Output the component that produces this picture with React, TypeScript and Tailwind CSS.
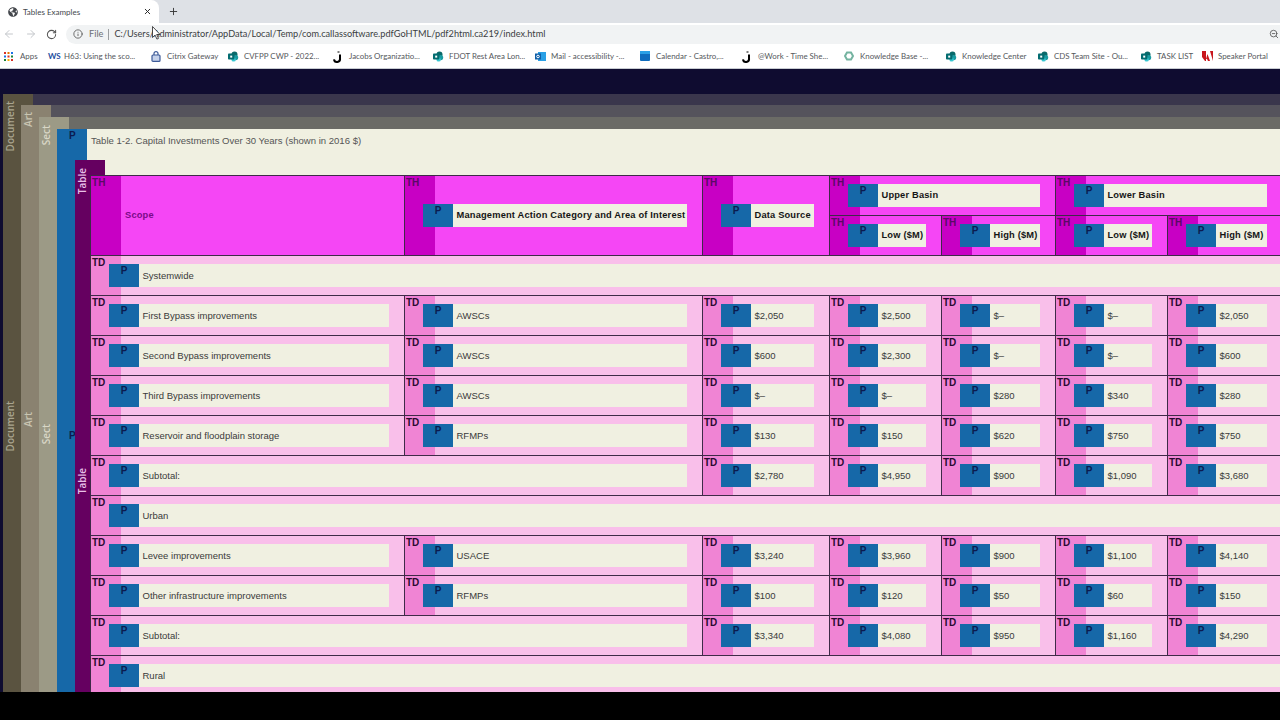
import { ArrowLeft, ArrowRight, Info, Plus, RotateCw, X, ZoomOut } from 'lucide-react';
import { FaGlobeAmericas } from 'react-icons/fa';

type Bookmark = { label: string; icon: string; width: string };

const bookmarks: Bookmark[] = [
    { label: 'Apps', icon: 'apps', width: 'w-[44px]' },
    { label: 'H63: Using the sco...', icon: 'ws', width: 'w-[103px]' },
    { label: 'Citrix Gateway', icon: 'citrix', width: 'w-[77px]' },
    { label: 'CVFPP CWP - 2022...', icon: 'sp', width: 'w-[105px]' },
    { label: 'Jacobs Organizatio...', icon: 'j', width: 'w-[100px]' },
    { label: 'FDOT Rest Area Lon...', icon: 'sp', width: 'w-[102px]' },
    { label: 'Mail - accessibility -...', icon: 'mail', width: 'w-[105px]' },
    { label: 'Calendar - Castro,...', icon: 'cal', width: 'w-[102px]' },
    { label: '@Work - Time She...', icon: 'j', width: 'w-[102px]' },
    { label: 'Knowledge Base -...', icon: 'kb', width: 'w-[102px]' },
    { label: 'Knowledge Center', icon: 'sp', width: 'w-[92px]' },
    { label: 'CDS Team Site - Ou...', icon: 'sp', width: 'w-[103px]' },
    { label: 'TASK LIST', icon: 'sp', width: 'w-[61px]' },
    { label: 'Speaker Portal', icon: 'adobe', width: 'w-[78px]' },
];

function BookmarkIcon({ kind }: { kind: string }) {
    if (kind === 'apps') {
        return (
            <svg width="9" height="9" viewBox="0 0 9 9">
                <rect x="0" y="0" width="2" height="2" fill="#d93025" />
                <rect x="3.5" y="0" width="2" height="2" fill="#e37400" />
                <rect x="7" y="0" width="2" height="2" fill="#1a73e8" />
                <rect x="0" y="3.5" width="2" height="2" fill="#1a73e8" />
                <rect x="3.5" y="3.5" width="2" height="2" fill="#d93025" />
                <rect x="7" y="3.5" width="2" height="2" fill="#188038" />
                <rect x="0" y="7" width="2" height="2" fill="#188038" />
                <rect x="3.5" y="7" width="2" height="2" fill="#f9ab00" />
                <rect x="7" y="7" width="2" height="2" fill="#d93025" />
            </svg>
        );
    }
    if (kind === 'ws') {
        return <span className="text-[8px] leading-none font-bold text-[#1f4fa0]">WS</span>;
    }
    if (kind === 'citrix') {
        return (
            <svg width="10" height="11" viewBox="0 0 10 11" fill="none" stroke="#3d5a98" strokeWidth="1.2">
                <rect x="1" y="4" width="8" height="6.4" rx="1" fill="#c6d2ea" />
                <path d="M3 4V2.6a2 2 0 0 1 4 0V4" />
            </svg>
        );
    }
    if (kind === 'sp') {
        return (
            <svg width="11" height="11" viewBox="0 0 11 11">
                <circle cx="6.5" cy="3.4" r="3" fill="#0b6a6a" />
                <circle cx="7.6" cy="6.6" r="2.6" fill="#1a9ba1" />
                <circle cx="5.6" cy="8.4" r="2.2" fill="#37c6d0" />
                <rect x="0" y="2.6" width="6.4" height="6" rx="0.8" fill="#036c70" />
                <rect x="2.2" y="4.6" width="2" height="2" fill="#ffffff" />
            </svg>
        );
    }
    if (kind === 'j') {
        return (
            <svg width="9" height="12" viewBox="0 0 9 12" fill="none" stroke="#000000" strokeWidth="2">
                <path d="M5.5 0.5v1M7 3.5v4a3 3 0 0 1-6 0.8" />
            </svg>
        );
    }
    if (kind === 'mail') {
        return (
            <svg width="11" height="11" viewBox="0 0 11 11">
                <rect x="3" y="1" width="8" height="9" fill="#2aa0e6" />
                <rect x="0" y="2.5" width="6" height="6" fill="#0f5fa8" />
                <circle cx="3" cy="5.5" r="1.3" fill="none" stroke="#ffffff" />
            </svg>
        );
    }
    if (kind === 'cal') {
        return (
            <svg width="10" height="10" viewBox="0 0 10 10">
                <rect x="0" y="0" width="10" height="10" rx="1" fill="#0f6cbd" />
                <rect x="0" y="0" width="10" height="3" fill="#2aa0e6" />
            </svg>
        );
    }
    if (kind === 'kb') {
        return (
            <svg width="10" height="10" viewBox="0 0 10 10" fill="none" stroke="#74b3a0" strokeWidth="2">
                <path d="M3 1.5h4L9 5 7 8.5H3L1 5z" />
            </svg>
        );
    }
    return (
        <svg width="11" height="10" viewBox="0 0 11 10" fill="#c8161d">
            <path d="M0 0h4v10H3L0 6zM7 0h4v10L8 0zM5.5 3l2.5 7H6L5 8H4z" />
        </svg>
    );
}

function BrowserChrome() {
    return (
        <div className="h-[69px] shrink-0 bg-white font-['Lato',sans-serif] text-[#4a4d52]">
            <div className="flex h-[23px] bg-[#dee1e6]">
                <div className="flex w-[159px] items-center rounded-tr-lg bg-white pl-[8px] pr-[7px] text-[8px] text-[#45484d]">
                    <FaGlobeAmericas size={10} className="text-[#45484d]" />
                    <span className="ml-[5px] flex-1">Tables Examples</span>
                    <X size={9} strokeWidth={2.5} className="text-[#222]" />
                </div>
                <div className="flex items-center pl-[9px]">
                    <Plus size={11} strokeWidth={2} className="text-[#333]" />
                </div>
            </div>
            <div className="flex h-[22px] items-center bg-white pl-[3px]">
                <ArrowLeft size={12} className="text-[#c4c7cb]" />
                <ArrowRight size={12} className="ml-[10px] text-[#c4c7cb]" />
                <RotateCw size={11} strokeWidth={2.2} className="ml-[9px] text-[#555]" />
                <div className="ml-[9px] flex h-[19px] flex-1 items-center rounded-l-full bg-[#f1f3f4] pl-[7px] pr-[1px] text-[9.2px]">
                    <Info size={10} className="text-[#555]" />
                    <span className="ml-[6px] text-[#6c6f73]">File</span>
                    <span className="mx-[5px] h-[11px] w-px bg-[#9a9da0]" />
                    <span className="text-[#3b3e42]">C:/Users/Administrator/AppData/Local/Temp/com.callassoftware.pdfGoHTML/pdf2html.ca219/index.html</span>
                    <ZoomOut size={10} className="ml-auto text-[#555]" />
                </div>
            </div>
            <div className="flex h-[24px] items-center border-b border-[#c8ccd2] pl-[4px] text-[7.9px] text-[#55585c]">
                {bookmarks.map((b) => (
                    <div key={b.label + b.icon} className={`flex shrink-0 items-center ${b.width}`}>
                        <span className="flex w-[16px] shrink-0 items-center">
                            <BookmarkIcon kind={b.icon} />
                        </span>
                        <span className="whitespace-nowrap">{b.label}</span>
                    </div>
                ))}
            </div>
        </div>
    );
}

function Label({ children, className }: { children: string; className: string }) {
    return (
        <span className={`absolute rotate-180 font-['Open_Sans',sans-serif] text-[10px] leading-none font-semibold [writing-mode:vertical-rl] ${className}`}>
            {children}
        </span>
    );
}

function Block({ text, bold }: { text: string; bold?: boolean }) {
    return (
        <div className="flex h-[23px] w-full">
            <div className="flex h-[23px] w-[30px] shrink-0 justify-center bg-[#1668a8] text-[10px] leading-[13px] font-bold text-[#0b1b50]">
                P
            </div>
            <div
                className={`flex flex-1 items-center whitespace-nowrap bg-[#f0f0e1] pt-px pl-[3.5px] ${
                    bold ? 'text-[9.3px] font-bold tracking-[0.18px] text-[#151515]' : 'text-[9.5px] text-[#3a3a3a]'
                }`}
            >
                {text}
            </div>
        </div>
    );
}

function Cell({
    kind,
    text,
    span,
    full,
    className = '',
}: {
    kind: 'TH' | 'TD';
    text?: string;
    span?: string;
    full?: boolean;
    className?: string;
}) {
    const isHead = kind === 'TH';
    return (
        <div
            className={`relative flex min-w-0 items-center border-t border-l border-[#3f2a48] pl-[18px] ${
                full ? 'pr-0' : 'pr-[15px]'
            } ${isHead ? 'bg-[#f546f5]' : 'bg-[#f9bfea]'} ${span ?? ''} ${className}`}
        >
            <div className={`absolute inset-y-0 left-0 w-[29.5px] pl-[1px] text-[10px] leading-[13px] font-bold ${isHead ? 'bg-[#c800c4] text-[#5a0a66]' : 'bg-[#f084d4] text-[#2a0a30]'}`}>
                {kind}
            </div>
            {text !== undefined && (
                <div className="relative w-full">
                    <Block text={text} bold={isHead} />
                </div>
            )}
        </div>
    );
}

type Row = { name: string; cat?: string; vals?: string[] };

const rows: Row[] = [
    { name: 'Systemwide' },
    { name: 'First Bypass improvements', cat: 'AWSCs', vals: ['$2,050', '$2,500', '$–', '$–', '$2,050'] },
    { name: 'Second Bypass improvements', cat: 'AWSCs', vals: ['$600', '$2,300', '$–', '$–', '$600'] },
    { name: 'Third Bypass improvements', cat: 'AWSCs', vals: ['$–', '$–', '$280', '$340', '$280'] },
    { name: 'Reservoir and floodplain storage', cat: 'RFMPs', vals: ['$130', '$150', '$620', '$750', '$750'] },
    { name: 'Subtotal:', vals: ['$2,780', '$4,950', '$900', '$1,090', '$3,680'] },
    { name: 'Urban' },
    { name: 'Levee improvements', cat: 'USACE', vals: ['$3,240', '$3,960', '$900', '$1,100', '$4,140'] },
    { name: 'Other infrastructure improvements', cat: 'RFMPs', vals: ['$100', '$120', '$50', '$60', '$150'] },
    { name: 'Subtotal:', vals: ['$3,340', '$4,080', '$950', '$1,160', '$4,290'] },
    { name: 'Rural' },
];

function DataTable() {
    return (
        <div className="grid w-[1192px] grid-cols-[314px_298px_127px_112px_114px_112px_115px] auto-rows-[40px]">
            {/* header */}
            <div className="relative row-span-2 flex items-center border-t border-l border-[#3f2a48] bg-[#f546f5] pt-px pl-[34px] text-[9.3px] font-bold tracking-[0.18px] text-[#7a0a88]">
                <div className="absolute inset-y-0 left-0 w-[29.5px] pl-[1px] text-[10px] leading-[13px] font-bold bg-[#c800c4] text-[#5a0a66]">TH</div>
                <span className="relative">Scope</span>
            </div>
            <Cell kind="TH" text="Management Action Category and Area of Interest" span="row-span-2" />
            <Cell kind="TH" text="Data Source" span="row-span-2" />
            <Cell kind="TH" text="Upper Basin" span="col-span-2" />
            <Cell kind="TH" text="Lower Basin" span="col-span-2" />
            <Cell kind="TH" text="Low ($M)" className="col-start-4" />
            <Cell kind="TH" text="High ($M)" />
            <Cell kind="TH" text="Low ($M)" />
            <Cell kind="TH" text="High ($M)" />

            {rows.map((r, i) => {
                if (!r.vals) {
                    return <Cell key={i} kind="TD" text={r.name} span="col-span-7" full />;
                }
                return [
                    r.cat ? (
                        <Cell key={`${i}-n`} kind="TD" text={r.name} />
                    ) : (
                        <Cell key={`${i}-n`} kind="TD" text={r.name} span="col-span-2" />
                    ),
                    r.cat ? <Cell key={`${i}-c`} kind="TD" text={r.cat} /> : null,
                    ...r.vals.map((v, j) => <Cell key={`${i}-${j}`} kind="TD" text={v} />),
                ];
            })}
        </div>
    );
}

export default function App() {
    return (
        <div className="relative flex h-[720px] w-[1280px] flex-col overflow-hidden bg-black font-['Liberation_Sans',sans-serif]">
            <BrowserChrome />
            <div className="h-[623px] shrink-0 overflow-hidden bg-[#0f0c30] pt-[25px] pl-[3px]">
                {/* Document */}
                <div className="relative h-[700px] bg-[#3a364c] pt-[11px] pl-[18px]">
                    <div className="absolute top-0 left-0 h-[30px] w-[30px] bg-[#5a5340]" />
                    <div className="absolute top-0 left-0 h-full w-[18px] bg-[#5a5340]" />
                    <Label className="top-[7px] left-[2px] text-[#a9a48f]">Document</Label>
                    <Label className="top-[307px] left-[2px] text-[#a9a48f]">Document</Label>
                    {/* Art */}
                    <div className="relative h-full bg-[#55535c] pt-[12px] pl-[18px]">
                        <div className="absolute top-0 left-0 h-[30px] w-[30px] bg-[#8a8270]" />
                        <div className="absolute top-0 left-0 h-full w-[18px] bg-[#8a8270]" />
                        <Label className="top-[7px] left-[2px] text-[#c9c5b2]">Art</Label>
                        <Label className="top-[307px] left-[2px] text-[#c9c5b2]">Art</Label>
                        {/* Sect */}
                        <div className="relative h-full bg-[#6b6b66] pt-[12px] pl-[18px]">
                            <div className="absolute top-0 left-0 h-[30px] w-[30px] bg-[#9c9a86]" />
                            <div className="absolute top-0 left-0 h-full w-[18px] bg-[#9c9a86]" />
                            <Label className="top-[8px] left-[2px] text-[#d9d7c6]">Sect</Label>
                            <Label className="top-[307px] left-[2px] text-[#d9d7c6]">Sect</Label>
                            {/* P */}
                            <div className="relative h-full bg-[#f0f0e1] pl-[18px]">
                                <div className="absolute top-0 left-0 h-[31px] w-[30px] bg-[#1668a8]" />
                                <div className="absolute top-0 left-0 h-full w-[18px] bg-[#1668a8]" />
                                <span className="absolute top-0 left-[12px] text-[10px] leading-[13px] font-bold text-[#0b1b50]">P</span>
                                <span className="absolute top-[300px] left-[12px] text-[10px] leading-[13px] font-bold text-[#0b1b50]">P</span>
                                <div className="relative h-[31px] pl-[16px] pt-[6px] text-[9.55px] leading-[12px] text-[#555]">
                                    Table 1-2. Capital Investments Over 30 Years (shown in 2016 $)
                                </div>
                                {/* Table */}
                                <div className="relative h-full pt-[15px] pl-[15px]">
                                    <div className="absolute top-0 left-0 h-[15px] w-[30px] bg-[#650060]" />
                                    <div className="absolute top-0 left-0 h-full w-[15px] bg-[#650060]" />
                                    <Label className="top-[8px] left-[2px] text-[#e8c0e8]">Table</Label>
                                    <Label className="top-[308px] left-[2px] text-[#e8c0e8]">Table</Label>
                                    <DataTable />
                                </div>
                            </div>
                        </div>
                    </div>
                </div>
            </div>
            {/* mouse pointer */}
            <svg className="absolute top-[26px] left-[152px]" width="9" height="14" viewBox="0 0 9 14">
                <path d="M0.5 0.5v11l2.6-2.4 1.8 4 1.6-.7-1.8-3.9h3.4z" fill="#fff" stroke="#222" strokeWidth="0.8" />
            </svg>
        </div>
    );
}
